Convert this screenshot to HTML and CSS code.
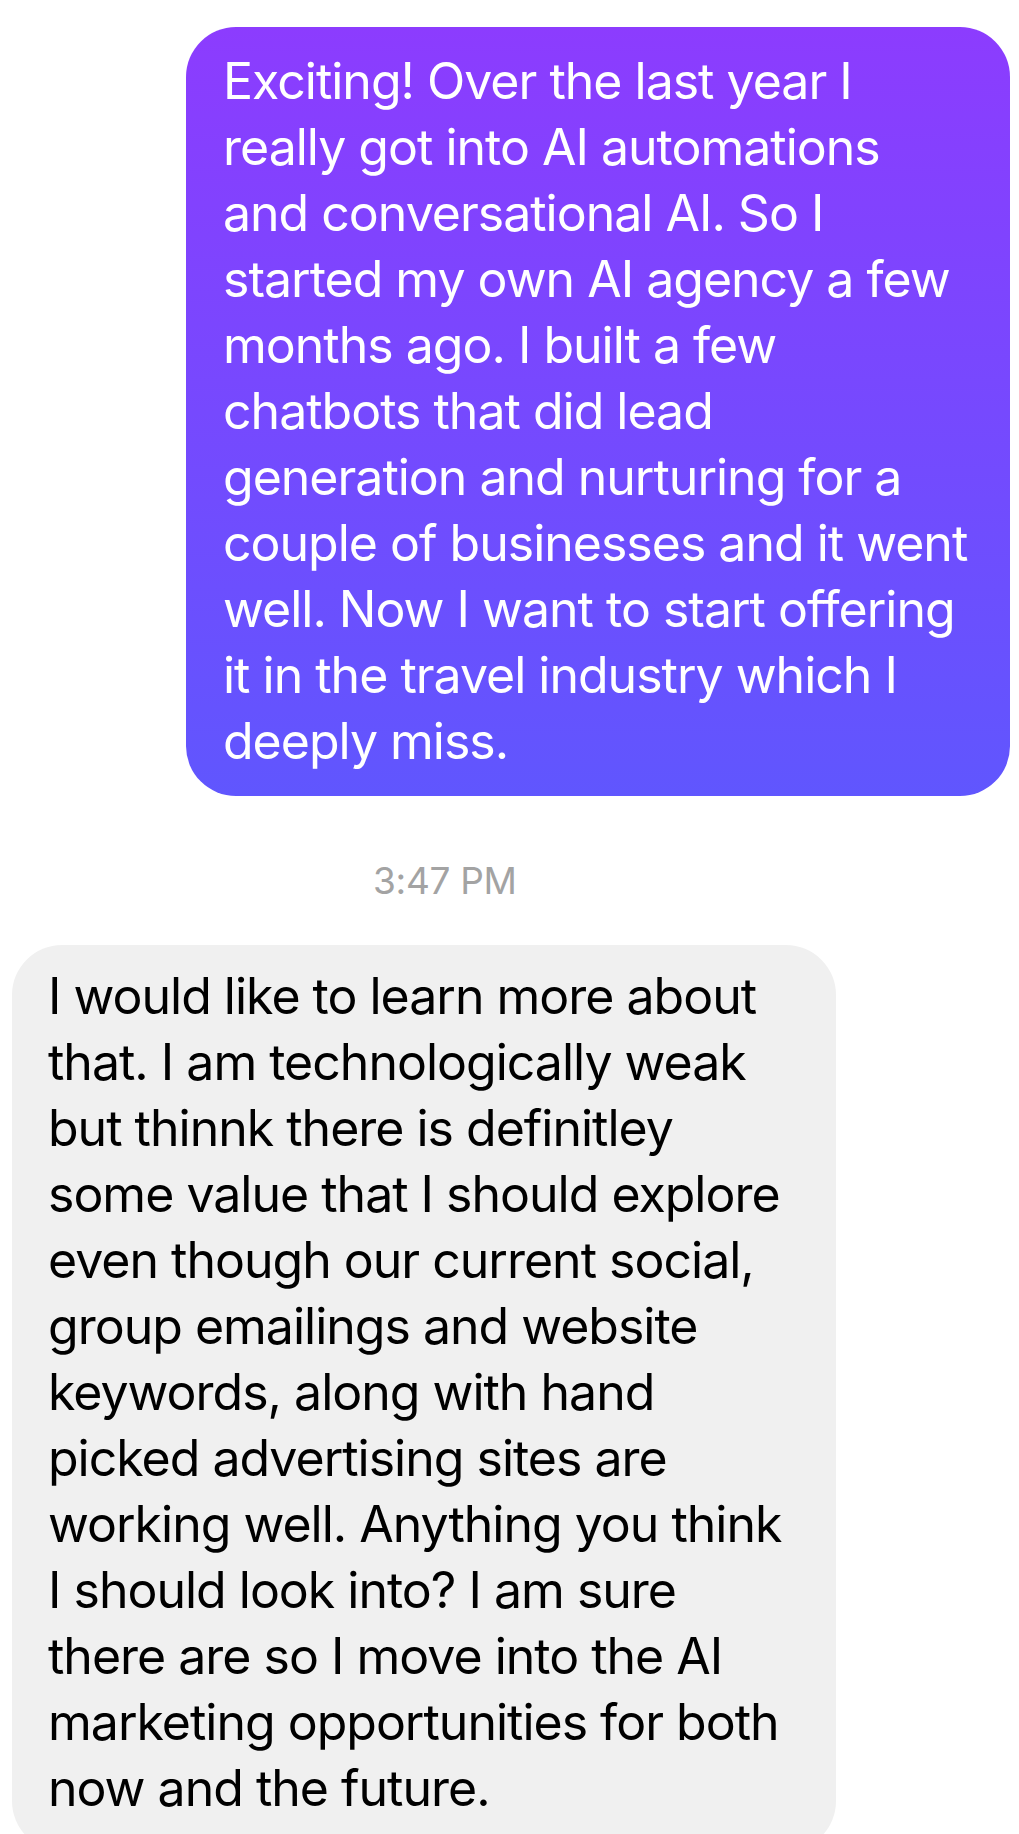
FILE: index.html
```html
<!DOCTYPE html>
<html lang="en">
<head>
    <meta charset="UTF-8">
    <title>Messages</title>
    <link rel="stylesheet" href="styles.css">
</head>
<body>
    <div class="thread">

        <div class="row row-sent">
            <div class="bubble bubble-sent">
                Exciting! Over the last year I<br>
                really got into AI automations<br>
                and conversational AI. So I<br>
                started my own AI agency a few<br>
                months ago. I built a few<br>
                chatbots that did lead<br>
                generation and nurturing for a<br>
                couple of businesses and it went<br>
                well. Now I want to start offering<br>
                it in the travel industry which I<br>
                deeply miss.
            </div>
        </div>

        <div class="timestamp">3:47 PM</div>

        <div class="row row-received">
            <div class="bubble bubble-received">
                I would like to learn more about<br>
                that. I am technologically weak<br>
                but thinnk there is definitley<br>
                some value that I should explore<br>
                even though our current social,<br>
                group emailings and website<br>
                keywords, along with hand<br>
                picked advertising sites are<br>
                working well. Anything you think<br>
                I should look into? I am sure<br>
                there are so I move into the AI<br>
                marketing opportunities for both<br>
                now and the future.
            </div>
        </div>

    </div>
</body>
</html>
```

FILE: styles.css
```css
body {
    margin: 0;
    background-color: #ffffff;
    font-family: 'Inter', 'Roboto', sans-serif;
    -webkit-font-smoothing: antialiased;
}

.thread {
    display: flex;
    flex-direction: column;
    padding-top: 27px;
}

.row {
    display: flex;
}

.row-sent {
    justify-content: flex-end;
    padding-right: 9px;
}

.row-received {
    justify-content: flex-start;
    padding-left: 12px;
}

/* shared bubble look */
.bubble {
    width: 824px;
    box-sizing: border-box;
    padding: 21px 38px 22px 37px;
    border-radius: 50px;
    font-size: 50px;
    line-height: 66px;
    letter-spacing: -1px;
    white-space: nowrap;
}

.bubble-sent {
    color: #ffffff;
    background: linear-gradient(180deg, #8c3cfe 0%, #6056fe 100%);
}

.bubble-received {
    color: #000000;
    background-color: #f0f0f0;
    padding-top: 18px;
    padding-left: 36px;
    padding-bottom: 30px;
}

.timestamp {
    margin: 58px 0 37px 373px;
    font-size: 37px;
    line-height: 54px;
    letter-spacing: -0.3px;
    color: #a3a3a3;
}
```
